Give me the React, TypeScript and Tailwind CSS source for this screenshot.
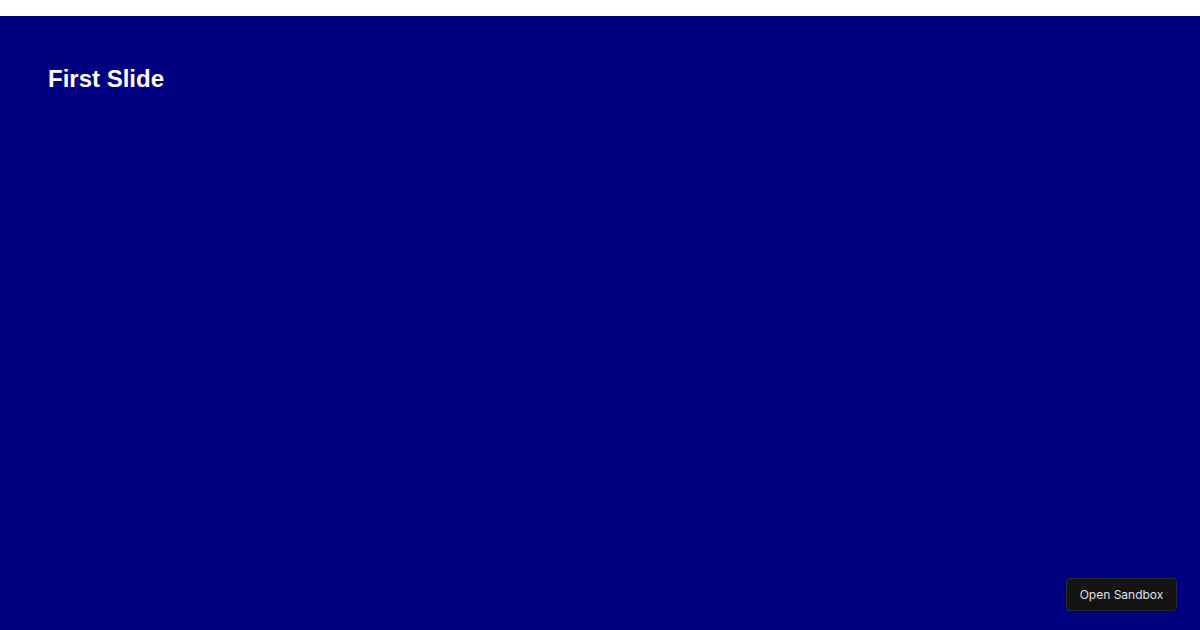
export default function App() {
  return (
    <div className="w-[1200px] h-[630px] bg-white pt-4 relative overflow-hidden">
      <div className="h-[614px] bg-[#000080] px-12 pt-[49px]">
        <h2 className="text-white text-[24px] leading-[28px] font-bold" style={{ fontFamily: '"Liberation Sans", Arial, sans-serif' }}>
          First Slide
        </h2>
      </div>
      <button
        className="absolute right-[23px] bottom-[19px] h-[33px] w-[111px] rounded-[4px] border border-[#2a2a2a] bg-[#141414] text-[12px] text-[#e0e0e8] flex items-center justify-center"
        style={{ fontFamily: 'Inter, "Liberation Sans", sans-serif' }}
      >
        Open Sandbox
      </button>
    </div>
  );
}
